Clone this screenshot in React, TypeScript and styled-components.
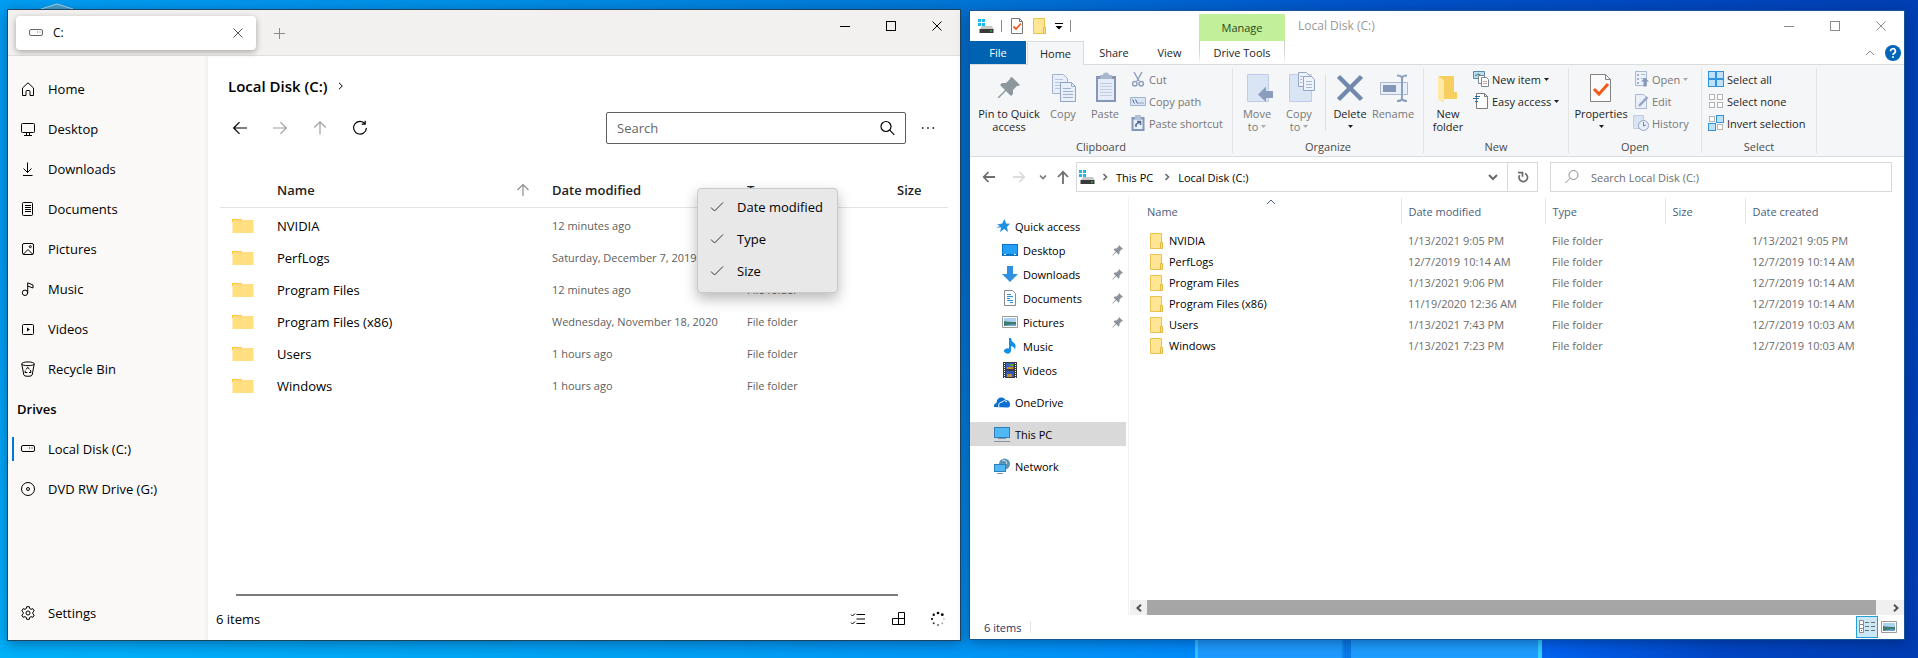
import React from 'react';
import styled, { createGlobalStyle, css } from 'styled-components';

const GlobalStyle = createGlobalStyle`
  *, *::before, *::after { box-sizing: border-box; }
  body {
    margin: 0;
    background: #0078d7;
    font-family: 'Open Sans', 'Noto Sans', sans-serif;
    color: #000;
  }
  button, input {
    font: inherit;
    color: inherit;
    margin: 0;
    padding: 0;
    border: 0;
    background: none;
  }
  a { color: inherit; text-decoration: none; }
  svg { display: block; flex: none; }
`;

/* ---------- desktop ---------- */

const Desktop = styled.div`
  position: relative;
  min-height: 100vh;
  display: grid;
  grid-template-columns: 954fr 936fr;
  gap: 8px;
  padding: 9px 13px 17px 7px;
  background: linear-gradient(90deg, #009df2 0%, #008fe6 25%, #0076d6 50%, #0052c8 72%, #003fb4 100%);
  isolation: isolate;
`;

const Glow = styled.div`
  position: absolute;
  left: 0;
  right: 0;
  bottom: 0;
  height: 60%;
  z-index: -2;
  background: linear-gradient(90deg, #00b1fa 0%, #00a3f4 30%, #0096f6 52%, #008cfb 62%, #0062ee 81%, #0046c4 90%, #003cb2 100%);
  mask-image: linear-gradient(180deg, transparent, #000);
`;

const Beam = styled.div`
  position: absolute;
  left: 62.3%;
  right: 19.6%;
  bottom: 0;
  height: 40px;
  z-index: -1;
  border-left: 3px solid #31c3ff;
  border-right: 4px solid #35d0ff;
  background: linear-gradient(90deg, #1d9bff 0 42%, #0a7ae8 43% 45%, #1e9eff 45% 100%);
`;

const DesktopIcon = styled.svg`
  position: absolute;
  left: 40px;
  top: 3px;
  z-index: -1;
`;

const frame = css`
  display: flex;
  flex-direction: column;
  min-width: 0;
  background: #fff;
  box-shadow: 0 3px 12px rgba(0, 20, 60, 0.4);
`;

/* ---------- modern file manager ---------- */

const FilesWindow = styled.section`
  ${frame}
  border: 1px solid #1d4560;
  font-size: 13px;
  line-height: 20px;
`;

const TabStrip = styled.header`
  display: flex;
  height: 46px;
  padding-left: 8px;
  background: #f3f1ef;
  border-bottom: 1px solid #e1dfdd;
`;

const Tab = styled.div`
  display: flex;
  align-items: center;
  width: 240px;
  height: 34px;
  margin-top: 6px;
  padding: 0 6px 0 12px;
  gap: 9px;
  background: #fff;
  border-radius: 4px;
  box-shadow: 0 2px 6px rgba(0, 0, 0, 0.32);
  font-size: 12px;
`;

const TabName = styled.span`
  flex: 1;
`;

const IconButton = styled.button<{ $w: number; $h: number; $color?: string }>`
  display: flex;
  align-items: center;
  justify-content: center;
  width: ${(p) => p.$w}px;
  height: ${(p) => p.$h}px;
  color: ${(p) => p.$color ?? '#000'};
`;

const NewTab = styled(IconButton)`
  margin: 7px auto 0 7px;
`;

const Columns = styled.div`
  display: flex;
  flex: 1;
  min-height: 0;
`;

const Sidebar = styled.nav`
  display: flex;
  flex-direction: column;
  width: 200px;
  padding: 13px 0 7px;
  background: linear-gradient(90deg, #faf9f8 196px, #f0efee 200px);
`;

const SideLink = styled.a<{ $active?: boolean; $last?: boolean }>`
  display: flex;
  align-items: center;
  gap: 12px;
  height: 40px;
  margin-left: 4px;
  margin-top: ${(p) => (p.$last ? 'auto' : '0')};
  &::before {
    content: '';
    width: 2px;
    height: 24px;
    margin-right: -6px;
    background: ${(p) => (p.$active ? '#0078d4' : 'transparent')};
  }
`;

const SideHeading = styled.h2`
  margin: 0;
  padding-left: 9px;
  font-size: 13px;
  font-weight: 600;
  line-height: 40px;
`;

const Content = styled.main`
  position: relative;
  display: flex;
  flex-direction: column;
  flex: 1;
  min-width: 0;
`;

const Crumb = styled.div`
  display: flex;
  align-items: center;
  gap: 9px;
  height: 40px;
  margin-top: 10px;
  padding-left: 20px;
  font-size: 15px;
  font-weight: 600;
`;

const NavBar = styled.div`
  display: flex;
  align-items: center;
  height: 40px;
  margin: 2px 12px 0;
`;

const SearchField = styled.label`
  display: flex;
  align-items: center;
  width: 300px;
  height: 32px;
  margin: 0 2px 0 auto;
  padding: 0 10px;
  border: 1px solid #605e5c;
  border-radius: 2px;
  input {
    flex: 1;
    min-width: 0;
    outline: none;
  }
  input::placeholder { color: #666; opacity: 1; }
`;

const FilesTable = styled.table`
  width: calc(100% - 24px);
  margin: 26px 12px 0;
  table-layout: fixed;
  border-collapse: collapse;
  th, td { padding: 0; text-align: left; white-space: nowrap; }
  th {
    height: 33px;
    font-weight: 600;
    color: #252423;
    border-bottom: 1px solid #e4e4e4;
  }
  tbody::before { content: ''; display: block; height: 2px; }
  td { height: 32px; }
  td:nth-child(n + 3) { font-size: 11px; color: #605e5c; }
  td svg { margin-left: 12px; }
`;

const SortHead = styled.div`
  display: flex;
  align-items: center;
  justify-content: space-between;
  padding-right: 21px;
  color: #252423;
`;

const ColumnMenu = styled.div`
  position: absolute;
  left: 489px;
  top: 132px;
  width: 141px;
  padding: 2px 0 5px;
  background: #e8e8e8;
  border: 1px solid #c9c9c9;
  border-radius: 4px;
  box-shadow: 0 6px 14px rgba(0, 0, 0, 0.28);
`;

const MenuItem = styled.label`
  display: flex;
  align-items: center;
  gap: 12px;
  height: 32px;
  padding-left: 11px;
  input { position: absolute; opacity: 0; width: 0; height: 0; }
  svg { visibility: hidden; }
  input:checked + svg { visibility: visible; }
`;

const ScrollLine = styled.div`
  height: 2px;
  margin: auto 62px 0 28px;
  background: #7b7b7b;
`;

const FilesStatus = styled.footer`
  display: flex;
  align-items: center;
  height: 40px;
  margin-top: 4px;
  padding: 0 2px 2px 8px;
  span { margin-right: auto; }
`;

/* ---------- classic explorer ---------- */

const ExplorerWindow = styled.section`
  ${frame}
  margin: 1px 0;
  border: 1px solid #17539a;
  font-size: 11px;
  line-height: 13px;
`;

const TitleBar = styled.header`
  display: flex;
  height: 30px;
`;

const QuickTools = styled.div`
  display: flex;
  align-items: center;
  width: 229px;
  padding-left: 8px;
  gap: 7px;
`;

const ToolDivider = styled.i`
  width: 1px;
  height: 12px;
  background: #8a8a8a;
`;

const ContextTab = styled.div`
  display: flex;
  align-items: center;
  justify-content: center;
  width: 86px;
  margin-top: 3px;
  background: #c1ef9a;
  color: #2a4a1a;
`;

const WindowTitle = styled.h1`
  margin: 0 auto 0 13px;
  font-size: 12px;
  font-weight: 400;
  line-height: 30px;
  color: #999;
`;

const RibbonTabs = styled.div`
  display: flex;
  height: 24px;
  border-bottom: 1px solid #dadbdc;
`;

const RibbonTab = styled.button<{ $w: number; $kind?: 'file' | 'open' | 'context' }>`
  width: ${(p) => p.$w}px;
  height: 23px;
  color: #262626;
  ${(p) => p.$kind === 'file' && css`background: #0063b1; color: #fff;`}
  ${(p) => p.$kind === 'open' && css`
    height: 24px;
    margin-left: 1px;
    background: #f5f6f7;
    border: 1px solid #dadbdc;
    border-bottom: 0;
  `}
  ${(p) => p.$kind === 'context' && css`
    margin-left: 4px;
    border: solid;
    border-width: 0 1px;
    border-image: linear-gradient(#d0d0d0 40%, #fff) 1;
  `}
`;

const RibbonEnd = styled.div`
  display: flex;
  align-items: center;
  gap: 5px;
  margin-left: auto;
  padding-right: 3px;
`;

const Ribbon = styled.div`
  display: flex;
  height: 92px;
  padding: 3px 0;
  background: #f5f6f7;
  border-bottom: 1px solid #dadbdc;
`;

const Group = styled.div<{ $w: number }>`
  display: flex;
  flex-direction: column;
  flex: none;
  width: ${(p) => p.$w}px;
  border-right: 1px solid #e2e3e4;
`;

const GroupBody = styled.div<{ $pad: number }>`
  display: flex;
  flex: 1;
  padding-left: ${(p) => p.$pad}px;
`;

const GroupLabel = styled.div`
  height: 13px;
  text-align: center;
  color: #4a4a4a;
`;

const BigButton = styled.button<{ $w: number; $off?: boolean }>`
  display: flex;
  flex-direction: column;
  align-items: center;
  flex: none;
  width: ${(p) => p.$w}px;
  padding-top: 4px;
  white-space: nowrap;
  color: ${(p) => (p.$off ? '#777' : '#1e1e1e')};
  > svg:first-child { margin-bottom: 3px; }
`;

const Line = styled.span`
  display: flex;
  align-items: center;
  justify-content: center;
  gap: 3px;
  min-height: 13px;
`;

const GroupDivider = styled.i`
  width: 1px;
  height: 55px;
  margin: 7px 3px 0 5px;
  background: #dcdde0;
`;

const SmallList = styled.div<{ $ml: number }>`
  margin-left: ${(p) => p.$ml}px;
`;

const SmallButton = styled.button<{ $off?: boolean }>`
  display: flex;
  align-items: center;
  gap: 3px;
  height: 22px;
  white-space: nowrap;
  color: ${(p) => (p.$off ? '#777' : '#1e1e1e')};
`;

const AddressRow = styled.div`
  display: flex;
  align-items: center;
  height: 40px;
  padding: 0 12px 0 6px;
`;

const AddressBox = styled.div`
  display: flex;
  align-items: center;
  flex: 1;
  height: 30px;
  border: 1px solid #d9d9d9;
`;

const DriveSlot = styled.span`
  padding: 0 6px 0 2px;
`;

const PathItem = styled.a`
  margin: 0 10px 0 7px;
`;

const HistoryButton = styled(IconButton)`
  margin-left: auto;
`;

const RefreshButton = styled(IconButton)`
  border-left: 1px solid #d9d9d9;
`;

const ExplorerSearch = styled.label`
  display: flex;
  align-items: center;
  gap: 11px;
  width: 342px;
  height: 30px;
  margin-left: 12px;
  padding: 0 13px;
  border: 1px solid #d9d9d9;
  input {
    flex: 1;
    min-width: 0;
    outline: none;
  }
  input::placeholder { color: #6d6d6d; opacity: 1; }
`;

const TreePane = styled.nav`
  width: 159px;
  padding-top: 17px;
  border-right: 1px solid #f0f0f0;
`;

const TreeLink = styled.a<{ $child?: boolean; $gap?: boolean; $active?: boolean }>`
  display: flex;
  align-items: center;
  gap: 5px;
  height: 24px;
  margin-top: ${(p) => (p.$gap ? 8 : 0)}px;
  margin-right: 2px;
  padding-left: ${(p) => (p.$child ? 32 : 24)}px;
  background: ${(p) => (p.$active ? '#d9d9d9' : 'transparent')};
  .pin { margin: 0 3px 0 auto; }
`;

const ListPane = styled.div`
  display: flex;
  flex-direction: column;
  flex: 1;
  min-width: 0;
`;

const ListTable = styled.table`
  width: 100%;
  margin-top: 1px;
  table-layout: fixed;
  border-collapse: collapse;
  th, td { padding: 0 0 0 7px; text-align: left; white-space: nowrap; }
  th {
    height: 26px;
    font-weight: 400;
    color: #4c607a;
    border-right: 1px solid #e5e5e5;
  }
  th:first-child, td:first-child { padding-left: 18px; }
  th:last-child { border-right: 0; }
  td { height: 21px; color: #6d6d6d; }
  td:first-child { color: #000; }
  tbody::before { content: ''; display: block; height: 6px; }
`;

const NameCell = styled.span`
  display: flex;
  align-items: center;
  gap: 4px;
  padding-left: 2px;
`;

const NameHead = styled.span`
  position: relative;
  display: block;
  svg { position: absolute; left: 119px; top: -8px; }
`;

const ScrollBar = styled.div`
  display: flex;
  align-items: center;
  height: 15px;
  margin: auto 0 0 1px;
  background: #f0f0f0;
`;

const Thumb = styled.div`
  flex: 1;
  height: 15px;
  margin-right: 11px;
  background: #a6a6a6;
`;

const ExplorerStatus = styled.footer`
  display: flex;
  align-items: center;
  height: 24px;
  padding: 0 4px 0 14px;
  color: #1f3364;
  i { width: 1px; height: 12px; margin: 0 auto 0 9px; background: #e6e6e6; }
`;

const ViewButton = styled(IconButton)<{ $on?: boolean }>`
  background: ${(p) => (p.$on ? '#cce8f6' : 'transparent')};
  border: 1px solid ${(p) => (p.$on ? '#26a0da' : 'transparent')};
`;

/* ---------- icons ---------- */

type IconProps = { s?: number; children: React.ReactNode; className?: string; fill?: string; stroke?: string };

const Icon = ({ s = 16, children, className, fill = 'none', stroke = 'currentColor' }: IconProps) => (
  <svg width={s} height={s} viewBox={`0 0 ${s} ${s}`} fill={fill} stroke={stroke} className={className} aria-hidden="true">
    {children}
  </svg>
);

const HomeIcon = () => <Icon><path d="M2.500 7 8 1.800 13.500 7v7.500h-3.500v-4q0-1-1-1h-2q-1 0-1 1v4H2.500z" strokeLinejoin="round" /></Icon>;
const DesktopGlyph = () => <Icon><rect x="1.500" y="2.500" width="13" height="9" rx="1" /><path d="M6.500 11.500v3M9.500 11.500v3M4 14.500h8" /></Icon>;
const DownloadGlyph = () => <Icon><path d="M7.500 1.500v10M3.500 7.500l4 4 4-4M3 14.500h9.500" /></Icon>;
const DocumentGlyph = () => <Icon><rect x="2.500" y="1.500" width="10" height="13" rx="1" /><path d="M5 4.500h6M5 6.500h6M5 8.500h6M5 10.500h6" /></Icon>;
const PictureGlyph = () => <Icon><rect x="2.500" y="2.500" width="11" height="11" rx="1.500" /><path d="m3.500 13 4.500-4.500L12.500 13" /><circle cx="10.300" cy="5.700" r="1" /></Icon>;
const MusicGlyph = () => <Icon><circle cx="5" cy="11.800" r="2.700" /><path d="M7.700 12V1.800l5.300 2.200v3L7.700 5" strokeLinejoin="round" /></Icon>;
const VideoGlyph = () => <Icon><rect x="2.500" y="3.500" width="11" height="10" rx="1" /><path d="m7 6.500 3 2-3 2z" fill="currentColor" stroke="none" /></Icon>;
const RecycleGlyph = () => (
  <Icon><ellipse cx="8" cy="2.800" rx="6.300" ry="1.900" /><path d="m1.800 3 2 11q.2 1.300 4.200 1.300T12.200 14l2-11" /><path d="M6 8.500 7.800 6.300l1.600 2M10.500 9l.5 2.500H9M5.200 9.700 5 11.500h2.300" /></Icon>
);
const DriveGlyph = ({ color }: { color?: string }) => (
  <Icon stroke={color ?? 'currentColor'}><rect x="1.500" y="4.500" width="13" height="6" rx="1.500" /><path d="M9 7h1M11.500 7h1" /></Icon>
);
const DiscGlyph = () => <Icon><circle cx="8" cy="8" r="6.500" /><circle cx="8" cy="8" r="1.500" /></Icon>;
const GearGlyph = () => (
  <Icon><circle cx="8" cy="8" r="2" /><path d="m6.700 1.700-.4 1.900-1.300.7-1.900-.6-1.300 2.200 1.400 1.300v1.600L1.800 10l1.300 2.300 1.900-.6 1.300.7.4 1.900h2.600l.4-1.900 1.300-.7 1.900.6 1.300-2.300-1.400-1.200V7.200l1.400-1.300-1.300-2.200-1.900.6-1.300-.7-.4-1.900z" strokeLinejoin="round" /></Icon>
);
const CloseGlyph = () => <Icon s={12}><path d="m1.500 1.500 9 9M10.500 1.500l-9 9" /></Icon>;
const PlusGlyph = () => <Icon s={12}><path d="M6.500 1v11M1 6.500h11" /></Icon>;
const MinGlyph = () => <Icon s={12}><path d="M1 6.500h10" /></Icon>;
const MaxGlyph = () => <Icon s={12}><rect x="1.500" y="1.500" width="9" height="9" /></Icon>;
const ArrowLeft = () => <Icon><path d="M15 8H1.800M7.500 2.200 1.700 8l5.800 5.800" strokeWidth="1.200" /></Icon>;
const ArrowRight = () => <Icon><path d="M1 8h13.200M8.500 2.200 14.300 8l-5.800 5.800" strokeWidth="1.200" /></Icon>;
const ArrowUp = () => <Icon><path d="M8 14.500V2M2.300 7.500 8 1.800l5.700 5.700" strokeWidth="1.200" /></Icon>;
const ArrowUpSmall = () => <Icon stroke="#8e8e8e"><path d="M8 14V2.500M2.500 8 8 2.500 13.500 8" strokeWidth="1.200" /></Icon>;
const RefreshGlyph = () => <Icon><path d="M13 3.700A6.400 6.400 0 1 0 14.400 8M9.700 4.200h3.500V.8" strokeWidth="1.200" /></Icon>;
const SearchGlyph = () => <Icon><circle cx="7" cy="6.500" r="5" strokeWidth="1.200" /><path d="m10.700 10.200 4.600 4.600" strokeWidth="1.200" /></Icon>;
const MoreGlyph = () => <Icon fill="#000" stroke="none"><path d="M2 7.200h1.500v1.500H2zM7.200 7.200h1.500v1.500H7.200zM12.500 7.200H14v1.500h-1.500z" /></Icon>;
const ChevronGlyph = () => <Icon s={8}><path d="m2 .8 3.300 3.200L2 7.200" /></Icon>;
const CheckGlyph = () => <Icon><path d="m2 8.500 3.500 3.500L14 3.500" stroke="#333" /></Icon>;
const ListGlyph = () => <Icon><path d="m1 3.500 1.500 1.500L5 2.500M1 11.500 2.500 13 5 10.500M6.500 3.500H15M6.500 8H15M6.500 12.500H15" /></Icon>;
const GridGlyph = () => <Icon><path d="M8.500 1.500h6v12h-12v-6h12M8.500 1.500v12" /></Icon>;
const SpinnerGlyph = () => (
  <Icon fill="#000" stroke="none">
    <circle cx="8" cy="2" r="1.300" /><circle cx="12.300" cy="3.700" r="1.400" /><circle cx="14" cy="8" r="1" opacity=".2" />
    <circle cx="12.300" cy="12.300" r=".9" opacity=".4" /><circle cx="8" cy="14" r="1" opacity=".6" />
    <circle cx="3.700" cy="12.300" r="1" opacity=".8" /><circle cx="2" cy="8" r="1.100" /><circle cx="3.700" cy="3.700" r="1.200" />
  </Icon>
);
const BigFolder = () => (
  <svg width="22" height="14" viewBox="0 0 22 14" aria-hidden="true">
    <path d="M0 0h9l1 1h12v13H0z" fill="#ffdf80" /><path d="M0 0h9l1 1-1 2H0z" fill="#ffc83d" /><path d="M1 2h8" stroke="#fff3cf" />
    <path d="M.500 3v11M21.500 2v12" stroke="#fff" opacity=".5" />
  </svg>
);

const DriveColor = () => (
  <Icon stroke="none">
    <path d="M0 1h3v3H0zM4 1h3v3H4zM0 5h3v3H0zM4 5h3v3H4z" fill="#1bb8f0" />
    <path d="M4 8h10l1.500 3H2z" fill="#c9c9c9" /><path d="M1.500 11h14v4h-14z" fill="#3a3a3a" /><path d="M12 12.500h2v1h-2z" fill="#36e04a" />
  </Icon>
);
const CheckPage = () => (
  <Icon><path d="M2.500.500h8l3 3v12h-11z" fill="#fff" stroke="#777" /><path d="M10.500.500v3h3" stroke="#777" /><path d="m4.500 8.500 2.500 2.500 5-5.500" stroke="#f2591b" strokeWidth="1.800" /></Icon>
);
const SmallFolder = () => (
  <Icon><path d="M1.500.500h11v15h-11z" fill="#ffe594" stroke="#ecc24c" /><path d="M11.500 9.500h2v6h-2z" fill="#ffe594" stroke="#e3b73d" /></Icon>
);
const Caret = ({ color = '#1e1e1e' }: { color?: string }) => (
  <svg width="5" height="3" viewBox="0 0 5 3" aria-hidden="true"><path d="M0 0h5L2.500 3z" fill={color} /></svg>
);
const PinBig = () => (
  <Icon s={32} stroke="none"><path d="m19 5 8 8-2 1-1 0-4 4 0 4-2 2-5-5-7 7-1 0 0-1 7-7-5-5 2-2 4 0 4-4 0-1z" fill="#8d979e" /></Icon>
);
const CopyBig = () => (
  <Icon s={32} stroke="#a3b3cc">
    <path d="M5.500 2.500h11l4 4v15h-15z" fill="#e9eff9" /><path d="M8 7.500h8M8 10.500h10M8 13.500h10M8 16.500h10" stroke="#b8c8e0" />
    <path d="M13.500 10.500h11l4 4v15h-15z" fill="#e9eff9" stroke="#8fa3c3" /><path d="M24.500 10.500v4h4M16 16.500h8M16 19.500h10M16 22.500h10M16 25.500h10" stroke="#9fb1cf" />
  </Icon>
);
const PasteBig = () => (
  <Icon s={32} stroke="none">
    <path d="M7 4h20v26H7z" fill="#8497b8" /><path d="M9 7h16v21H9z" fill="#e6edf8" /><path d="M11 3h3a3 2.500 0 0 1 6 0h3v4H11z" fill="#a9b6cb" />
    <path d="M11 11.500h12M11 14.500h12M11 17.500h12M11 20.500h12M11 23.500h12" stroke="#c0cde2" />
  </Icon>
);
const MoveBig = () => (
  <Icon s={32} stroke="none"><path d="M6.500 2.500h21v27h-21z" fill="#d9e4f4" stroke="#c0cde2" /><path d="m17 22.500 8-8V19h7v7h-7v4z" fill="#8b9dbd" /></Icon>
);
const CopyToBig = () => (
  <Icon s={32} stroke="#93a5c4">
    <path d="M6.500 2.500h22v27h-22z" fill="#d9e4f4" stroke="#c0cde2" /><path d="M15.500.500h8l3 3v11h-11z" fill="#eef3fb" />
    <path d="M20.500 4.500h8l3 3v11h-11z" fill="#eef3fb" /><path d="M23 9.500h6M23 12.500h6M23 15.500h6M17 4.500h3M17 7.500h2M17 10.500h2" stroke="#a9b9d4" />
  </Icon>
);
const DeleteBig = () => <Icon s={32} stroke="#7388ad"><path d="m4.500 4.500 23 23M27.500 4.500l-23 23" strokeWidth="4.500" /></Icon>;
const RenameBig = () => (
  <Icon s={32} stroke="#a9b7d0"><path d="M3.500 10.500h27v12h-27z" fill="#e9eff9" /><path d="M6 13h13v7H6z" fill="#8497b8" stroke="none" /><path d="M20 3.500q4 0 5 2 1-2 5-2M20 29q4 0 5-2 1 2 5 2M25 5v22" stroke="#8d9fbe" strokeWidth="2" /></Icon>
);
const NewFolderBig = () => (
  <Icon s={32} stroke="none"><path d="M7 4h15v16h3v7H12z" fill="#f6cf60" /><path d="M6 4.500 12 8v23l-6-4z" fill="#ffe9a6" /></Icon>
);
const PropertiesBig = () => (
  <Icon s={32}><path d="M5.500 2.500h15l5 5v22h-20z" fill="#fbfbfb" stroke="#838383" /><path d="M20.500 2.500v5h5" stroke="#838383" /><path d="m9 17 5 5 9-10" stroke="#f2591b" strokeWidth="3" /></Icon>
);
const CutIcon = () => (
  <Icon stroke="#8fa0bd"><path d="m4 1 5 9M12 1 7 10" strokeWidth="1.500" /><circle cx="4.800" cy="12.800" r="2.200" strokeWidth="1.500" /><circle cx="11.200" cy="12.800" r="2.200" strokeWidth="1.500" /></Icon>
);
const PathIcon = () => (
  <Icon stroke="#a3b3cc"><path d="M.500 4.500h15v8H.500z" fill="#d9e4f4" /><path d="m2.500 6.500 2 4M5.500 6.500l2 4M8.500 10h1M10.500 10h1M12.500 10h1" stroke="#50658c" /></Icon>
);
const ShortcutIcon = () => (
  <Icon stroke="none"><path d="M1.500 2h13v14h-13z" fill="#8497b8" /><path d="M5 0h6v4H5z" fill="#b3c0d4" /><path d="M3.500 4.500h9v9.500h-9z" fill="#eaf0fa" /><path d="M6 12V9.500L9.500 7M7 6.500h3.500V10" stroke="#50658c" strokeWidth="1.500" fill="none" /></Icon>
);
const NewItemIcon = () => (
  <Icon stroke="#7b868f"><path d="M.500.500h11v7H.500z" fill="#b9dcf2" stroke="#5d8aa8" /><path d="M2 5l3-2 4 2" stroke="#2f7d58" /><path d="M5.500 4.500h6v8h-6z" fill="#fff" /><path d="M8.500 6.500h5l2 2v7h-7z" fill="#fff" /><path d="M10 10.500h4M10 12.500h4" stroke="#d8a0a0" /></Icon>
);
const EasyIcon = () => (
  <Icon stroke="#7b7b7b"><path d="M3.500.500h8l3 3v12h-11z" fill="#fff" /><path d="M11.500.500v3h3" /><path d="M2 3.500h5M0 5.500h6M2 8.500h3" stroke="#1c6ea4" /></Icon>
);
const OpenIcon = () => (
  <Icon stroke="#a9b7d0"><path d="M2.500.500h11v14h-11z" fill="#eef3fb" /><path d="M4 3h2v2H4zM4 7h2v2H4zM4 11h2v2H4z" fill="#9db0cf" stroke="none" /><path d="M8 3.500h4M8 7.500h3" /><path d="m12 6.500 4 4h-2.500v5h-3v-5H8z" fill="#8497b8" stroke="none" /></Icon>
);
const EditIcon = () => (
  <Icon stroke="#a9b7d0"><path d="M2.500 1.500h8l3 3v11h-11z" fill="#eaf0fa" /><path d="M6 13 14.500 4" stroke="#93a5c4" strokeWidth="2.500" /></Icon>
);
const HistoryIcon = () => (
  <Icon stroke="#a9b7d0"><path d="M.500.500h10v13H.500z" fill="#d9e4f4" stroke="#c0cde2" /><circle cx="10.500" cy="10.500" r="5" fill="#e9eff9" stroke="#93a5c4" /><path d="M10.500 7v4l2.500-1" stroke="#6f84a8" /></Icon>
);
const tile = (x: number, y: number, on: boolean) => (
  <rect key={`${x}${y}`} x={x + 0.5} y={y + 0.5} width={on ? 7 : 5} height={on ? 7 : 5} fill={on ? '#bfe1fb' : '#fff'} stroke={on ? '#2f93e0' : '#b3b3b3'} />
);
const SelectAllIcon = () => <Icon>{tile(0, 0, true)}{tile(8, 0, true)}{tile(0, 8, true)}{tile(8, 8, true)}</Icon>;
const SelectNoneIcon = () => <Icon>{tile(1, 1, false)}{tile(9, 1, false)}{tile(1, 9, false)}{tile(9, 9, false)}</Icon>;
const InvertIcon = () => <Icon>{tile(1, 1, false)}{tile(8, 0, true)}{tile(0, 8, true)}{tile(9, 9, false)}</Icon>;

const HelpIcon = () => (
  <svg width="16" height="16" viewBox="0 0 16 16" aria-hidden="true">
    <circle cx="8" cy="8" r="8" fill="#0064b8" />
    <path d="M5.600 6.200a2.400 2.400 0 1 1 3.600 2Q8 8.900 8 10" fill="none" stroke="#fff" strokeWidth="1.700" /><circle cx="8" cy="12" r="1" fill="#fff" />
  </svg>
);
const NavLeft = () => <Icon><path d="M14 8H3M7.500 3 2.700 8l4.800 5" strokeWidth="1.800" /></Icon>;
const NavRight = () => <Icon><path d="M2 8h11M8.500 3l4.800 5-4.800 5" strokeWidth="1.800" /></Icon>;
const NavUp = () => <Icon><path d="M8 15V3M3 8l5-5.200L13 8" strokeWidth="1.800" /></Icon>;
const Down = () => <Icon s={8}><path d="M1 2.500 4 5.500l3-3" strokeWidth="1.600" /></Icon>;
const DownWide = () => <Icon s={10}><path d="m1 3 4 4 4-4" strokeWidth="2" /></Icon>;
const UpThin = () => <Icon s={10}><path d="m1 7 4-4 4 4" /></Icon>;
const PathArrow = () => <Icon s={8}><path d="m2.500 1 3 3-3 3" stroke="#6a6a6a" strokeWidth="1.600" /></Icon>;
const ReloadIcon = () => <Icon s={12}><path d="M8 2.600A4.200 4.200 0 1 1 2.700 4.200M1 1.700h4.500v4" strokeWidth="1.700" /></Icon>;
const LensIcon = () => <Icon stroke="#8a8a8a"><circle cx="9.500" cy="6" r="4.500" /><path d="M6.300 9.200 1.500 14" /></Icon>;

const StarIcon = () => <Icon stroke="none"><path d="m10.500 1 1.600 4.500 3.900.3-3 2.900L14 14l-3.700-3L6 14l1.200-4.500L2 9.500l4-1.500-3-1.500 5.200-1z" fill="#1f8fe0" /></Icon>;
const DesktopColor = () => <Icon stroke="none"><path d="M0 2h16v12H0z" fill="#0c74c8" /><path d="M1 3h14v9H1z" fill="#23a0f5" /><path d="M2 12.500h2M12 12.500h2" stroke="#fff" /></Icon>;
const DownloadColor = () => <Icon stroke="none"><path d="M5 0h6v8h5l-8 8-8-8h5z" fill="#2f8fe0" /></Icon>;
const DocumentColor = () => <Icon><path d="M2.500.500h8l3 3v12h-11z" fill="#fff" stroke="#8a8a8a" /><path d="M5 4.500h4M5 6.500h6M5 8.500h3M5 10.500h6M8 12.500h3" stroke="#2b8fdc" /></Icon>;
const PictureColor = () => (
  <Icon stroke="none"><path d="M.500 2.500h15v11H.500z" fill="#fff" stroke="#9a9a9a" /><path d="M2 4h12v4H2z" fill="#a9d2f5" /><path d="M2 7q4 1 12 1v4H2z" fill="#3f7a6a" /><path d="M5 11q5-1 9-.500V12H2z" fill="#6aa7d8" /></Icon>
);
const MusicColor = () => <Icon stroke="none"><path d="M7 0h2q0 3 3 5t.5 7q.5-3-3.500-4v5a3.500 2.700 0 1 1-2-2.500z" fill="#0f8fe8" /></Icon>;
const VideoColor = () => (
  <Icon stroke="none"><path d="M1 0h14v16H1z" fill="#3a3a3a" /><path d="M2.500 1v15M13.500 1v15" stroke="#fff" strokeDasharray="1 1" /><path d="M4 1h8v6H4z" fill="#3b62c0" /><path d="M4 9h8v6H4z" fill="#2f55b0" /><path d="M5 5h6v2H5zM5 12h5v3H5z" fill="#c98a2a" /><path d="M8 2h3v2H8z" fill="#4fae3a" /></Icon>
);
const CloudColor = () => <Icon stroke="none"><path d="M0 13q-.5-3.500 2.500-4Q3 3 8 3.500 11 4 11.500 6q4 0 4.500 4 0 3.500-2 3.500z" fill="#0a6fd0" /><path d="M5 13q-1.500-4 3-5 2.500-3 5 0" stroke="#fff" fill="none" /></Icon>;
const PcColor = () => <Icon stroke="none"><path d="M0 1h16v11H0z" fill="#2e7fb8" /><path d="M1 2h14v9H1z" fill="#52b8f5" /><path d="M4 12.500h8M0 15.500h16" stroke="#7f95a8" /></Icon>;
const NetworkColor = () => <Icon stroke="none"><circle cx="10.500" cy="6" r="5.500" fill="#5a94b8" /><path d="M8 2q4 0 5 3l-3 3" stroke="#cfe3ee" fill="none" /><path d="M0 6h12v8H0z" fill="#2e7fb8" /><path d="M1 7h10v6H1z" fill="#52b8f5" /><path d="M3 15.500h6" stroke="#7f95a8" /></Icon>;
const PinSmall = () => (
  <Icon s={11} className="pin" stroke="none"><path d="m7 0 4 4-1.500.5-2 2v2L6.500 9.500 4.300 7.300 1 10.500H.500V10l3.200-3.300L1.500 4.500l1-1h2l2-2z" fill="#89939b" /></Icon>
);
const DetailsIcon = () => <Icon stroke="#8a8a8a"><path d="M.500 1.500h4v12h-4zM.500 5.500h4M.500 9.500h4" fill="#fff" /><path d="M6 3.500h4M12 3.500h4M6 7.500h4M12 7.500h4M6 11.500h4M12 11.500h4" stroke="#6d6d6d" /><path d="M2 11h1v1H2z" fill="#d33" stroke="none" /></Icon>;

/* ---------- data ---------- */

const places = [
  { name: 'Home', icon: <HomeIcon /> },
  { name: 'Desktop', icon: <DesktopGlyph /> },
  { name: 'Downloads', icon: <DownloadGlyph /> },
  { name: 'Documents', icon: <DocumentGlyph /> },
  { name: 'Pictures', icon: <PictureGlyph /> },
  { name: 'Music', icon: <MusicGlyph /> },
  { name: 'Videos', icon: <VideoGlyph /> },
  { name: 'Recycle Bin', icon: <RecycleGlyph /> },
];

const folders = [
  { name: 'NVIDIA', ago: '12 minutes ago', modified: '1/13/2021 9:05 PM', created: '1/13/2021 9:05 PM' },
  { name: 'PerfLogs', ago: 'Saturday, December 7, 2019', modified: '12/7/2019 10:14 AM', created: '12/7/2019 10:14 AM' },
  { name: 'Program Files', ago: '12 minutes ago', modified: '1/13/2021 9:06 PM', created: '12/7/2019 10:14 AM' },
  { name: 'Program Files (x86)', ago: 'Wednesday, November 18, 2020', modified: '11/19/2020 12:36 AM', created: '12/7/2019 10:14 AM' },
  { name: 'Users', ago: '1 hours ago', modified: '1/13/2021 7:43 PM', created: '12/7/2019 10:03 AM' },
  { name: 'Windows', ago: '1 hours ago', modified: '1/13/2021 7:23 PM', created: '12/7/2019 10:03 AM' },
];

const tree = [
  { name: 'Quick access', icon: <StarIcon /> },
  { name: 'Desktop', icon: <DesktopColor />, child: true, pin: true },
  { name: 'Downloads', icon: <DownloadColor />, child: true, pin: true },
  { name: 'Documents', icon: <DocumentColor />, child: true, pin: true },
  { name: 'Pictures', icon: <PictureColor />, child: true, pin: true },
  { name: 'Music', icon: <MusicColor />, child: true },
  { name: 'Videos', icon: <VideoColor />, child: true },
  { name: 'OneDrive', icon: <CloudColor />, gap: true },
  { name: 'This PC', icon: <PcColor />, gap: true, active: true },
  { name: 'Network', icon: <NetworkColor />, gap: true },
];

/* ---------- windows ---------- */

const WindowButtons = ({ color, h }: { color: string; h: number }) => (
  <>
    <IconButton $w={46} $h={h} $color={color} aria-label="Minimize"><MinGlyph /></IconButton>
    <IconButton $w={46} $h={h} $color={color} aria-label="Maximize"><MaxGlyph /></IconButton>
    <IconButton $w={46} $h={h} $color={color} aria-label="Close"><CloseGlyph /></IconButton>
  </>
);

const Files = () => (
  <FilesWindow>
    <TabStrip>
      <Tab>
        <DriveGlyph color="#666" />
        <TabName>C:</TabName>
        <IconButton $w={24} $h={24} $color="#555" aria-label="Close tab"><CloseGlyph /></IconButton>
      </Tab>
      <NewTab $w={32} $h={32} $color="#8a8a8a" aria-label="New tab"><PlusGlyph /></NewTab>
      <WindowButtons color="#000" h={32} />
    </TabStrip>
    <Columns>
      <Sidebar>
        {places.map((p) => (
          <SideLink key={p.name} href="#">{p.icon}{p.name}</SideLink>
        ))}
        <SideHeading>Drives</SideHeading>
        <SideLink href="#" $active><DriveGlyph />Local Disk (C:)</SideLink>
        <SideLink href="#"><DiscGlyph />DVD RW Drive (G:)</SideLink>
        <SideLink href="#" $last><GearGlyph />Settings</SideLink>
      </Sidebar>
      <Content>
        <Crumb>Local Disk (C:) <ChevronGlyph /></Crumb>
        <NavBar>
          <IconButton $w={40} $h={40} aria-label="Back"><ArrowLeft /></IconButton>
          <IconButton $w={40} $h={40} $color="#a0a0a0" aria-label="Forward"><ArrowRight /></IconButton>
          <IconButton $w={40} $h={40} $color="#a0a0a0" aria-label="Up"><ArrowUp /></IconButton>
          <IconButton $w={40} $h={40} aria-label="Refresh"><RefreshGlyph /></IconButton>
          <SearchField>
            <input type="text" placeholder="Search" aria-label="Search" />
            <SearchGlyph />
          </SearchField>
          <IconButton $w={40} $h={40} aria-label="More"><MoreGlyph /></IconButton>
        </NavBar>
        <FilesTable>
          <colgroup>
            <col style={{ width: 57 }} /><col style={{ width: 275 }} /><col style={{ width: 195 }} /><col style={{ width: 150 }} /><col />
          </colgroup>
          <thead>
            <tr>
              <th />
              <th><SortHead>Name <ArrowUpSmall /></SortHead></th>
              <th>Date modified</th>
              <th>Type</th>
              <th>Size</th>
            </tr>
          </thead>
          <tbody>
            {folders.map((f) => (
              <tr key={f.name}>
                <td><BigFolder /></td>
                <td>{f.name}</td>
                <td>{f.ago}</td>
                <td>File folder</td>
                <td />
              </tr>
            ))}
          </tbody>
        </FilesTable>
        <ColumnMenu>
          {['Date modified', 'Type', 'Size'].map((c) => (
            <MenuItem key={c}><input type="checkbox" defaultChecked /><CheckGlyph />{c}</MenuItem>
          ))}
        </ColumnMenu>
        <ScrollLine />
        <FilesStatus>
          <span>6 items</span>
          <IconButton $w={40} $h={32} aria-label="Select"><ListGlyph /></IconButton>
          <IconButton $w={40} $h={32} aria-label="Layout"><GridGlyph /></IconButton>
          <IconButton $w={40} $h={32} aria-label="Activity"><SpinnerGlyph /></IconButton>
        </FilesStatus>
      </Content>
    </Columns>
  </FilesWindow>
);

const RibbonGroup = ({ label, w, pad, children }: { label: string; w: number; pad: number; children: React.ReactNode }) => (
  <Group $w={w}>
    <GroupBody $pad={pad}>{children}</GroupBody>
    <GroupLabel>{label}</GroupLabel>
  </Group>
);

const Explorer = () => (
  <ExplorerWindow>
    <TitleBar>
      <QuickTools>
        <DriveColor />
        <ToolDivider />
        <CheckPage />
        <SmallFolder />
        <Icon s={8}><path d="M0 1.500h8" /><path d="M.500 4h7L4 7.500z" fill="currentColor" stroke="none" /></Icon>
        <ToolDivider />
      </QuickTools>
      <ContextTab>Manage</ContextTab>
      <WindowTitle>Local Disk (C:)</WindowTitle>
      <WindowButtons color="#8c8c8c" h={29} />
    </TitleBar>
    <RibbonTabs>
      <RibbonTab $w={56} $kind="file">File</RibbonTab>
      <RibbonTab $w={57} $kind="open">Home</RibbonTab>
      <RibbonTab $w={60}>Share</RibbonTab>
      <RibbonTab $w={51}>View</RibbonTab>
      <RibbonTab $w={86} $kind="context">Drive Tools</RibbonTab>
      <RibbonEnd>
        <IconButton $w={20} $h={22} $color="#8c8c8c" aria-label="Collapse ribbon"><UpThin /></IconButton>
        <IconButton $w={16} $h={22} aria-label="Help"><HelpIcon /></IconButton>
      </RibbonEnd>
    </RibbonTabs>
    <Ribbon>
      <RibbonGroup label="Clipboard" w={263} pad={6}>
        <BigButton $w={66}><PinBig /><Line>Pin to Quick</Line><Line>access</Line></BigButton>
        <BigButton $w={42} $off><CopyBig /><Line>Copy</Line></BigButton>
        <BigButton $w={42} $off><PasteBig /><Line>Paste</Line></BigButton>
        <SmallList $ml={4}>
          <SmallButton $off><CutIcon />Cut</SmallButton>
          <SmallButton $off><PathIcon />Copy path</SmallButton>
          <SmallButton $off><ShortcutIcon />Paste shortcut</SmallButton>
        </SmallList>
      </RibbonGroup>
      <RibbonGroup label="Organize" w={191} pad={3}>
        <BigButton $w={42} $off><MoveBig /><Line>Move</Line><Line>to <Caret color="#aaa" /></Line></BigButton>
        <BigButton $w={42} $off><CopyToBig /><Line>Copy</Line><Line>to <Caret color="#aaa" /></Line></BigButton>
        <GroupDivider />
        <BigButton $w={42}><DeleteBig /><Line>Delete</Line><Line><Caret /></Line></BigButton>
        <BigButton $w={44} $off><RenameBig /><Line>Rename</Line></BigButton>
      </RibbonGroup>
      <RibbonGroup label="New" w={145} pad={3}>
        <BigButton $w={42}><NewFolderBig /><Line>New</Line><Line>folder</Line></BigButton>
        <SmallList $ml={4}>
          <SmallButton><NewItemIcon />New item <Caret /></SmallButton>
          <SmallButton><EasyIcon />Easy access <Caret /></SmallButton>
        </SmallList>
      </RibbonGroup>
      <RibbonGroup label="Open" w={133} pad={2}>
        <BigButton $w={60}><PropertiesBig /><Line>Properties</Line><Line><Caret /></Line></BigButton>
        <SmallList $ml={2}>
          <SmallButton $off><OpenIcon />Open <Caret color="#aaa" /></SmallButton>
          <SmallButton $off><EditIcon />Edit</SmallButton>
          <SmallButton $off><HistoryIcon />History</SmallButton>
        </SmallList>
      </RibbonGroup>
      <RibbonGroup label="Select" w={115} pad={6}>
        <SmallList $ml={0}>
          <SmallButton><SelectAllIcon />Select all</SmallButton>
          <SmallButton><SelectNoneIcon />Select none</SmallButton>
          <SmallButton><InvertIcon />Invert selection</SmallButton>
        </SmallList>
      </RibbonGroup>
    </Ribbon>
    <AddressRow>
      <IconButton $w={26} $h={30} $color="#6e6e6e" aria-label="Back"><NavLeft /></IconButton>
      <IconButton $w={34} $h={30} $color="#dcdcdc" aria-label="Forward"><NavRight /></IconButton>
      <IconButton $w={14} $h={30} $color="#777" aria-label="Recent locations"><Down /></IconButton>
      <IconButton $w={26} $h={30} $color="#6e6e6e" aria-label="Up"><NavUp /></IconButton>
      <AddressBox>
        <DriveSlot><DriveColor /></DriveSlot>
        <PathArrow />
        <PathItem href="#">This PC</PathItem>
        <PathArrow />
        <PathItem href="#">Local Disk (C:)</PathItem>
        <HistoryButton $w={28} $h={28} $color="#6a6a6a" aria-label="Previous locations"><DownWide /></HistoryButton>
        <RefreshButton $w={30} $h={28} $color="#6a6a6a" aria-label="Refresh"><ReloadIcon /></RefreshButton>
      </AddressBox>
      <ExplorerSearch>
        <LensIcon />
        <input type="text" placeholder="Search Local Disk (C:)" aria-label="Search Local Disk (C:)" />
      </ExplorerSearch>
    </AddressRow>
    <Columns>
      <TreePane>
        {tree.map((t) => (
          <TreeLink key={t.name} href="#" $child={t.child} $gap={t.gap} $active={t.active}>
            {t.icon}{t.name}{t.pin && <PinSmall />}
          </TreeLink>
        ))}
      </TreePane>
      <ListPane>
        <ListTable>
          <colgroup>
            <col style={{ width: 272 }} /><col style={{ width: 144 }} /><col style={{ width: 120 }} /><col style={{ width: 80 }} /><col />
          </colgroup>
          <thead>
            <tr>
              <th><NameHead>Name <UpThin /></NameHead></th>
              <th>Date modified</th>
              <th>Type</th>
              <th>Size</th>
              <th>Date created</th>
            </tr>
          </thead>
          <tbody>
            {folders.map((f) => (
              <tr key={f.name}>
                <td><NameCell><SmallFolder />{f.name}</NameCell></td>
                <td>{f.modified}</td>
                <td>File folder</td>
                <td />
                <td>{f.created}</td>
              </tr>
            ))}
          </tbody>
        </ListTable>
        <ScrollBar>
          <IconButton $w={17} $h={15} $color="#505050" aria-label="Scroll left"><Icon s={8}><path d="M6 .800 2.500 4 6 7.200" strokeWidth="2" /></Icon></IconButton>
          <Thumb />
          <IconButton $w={17} $h={15} $color="#505050" aria-label="Scroll right"><Icon s={8}><path d="M2 .800 5.500 4 2 7.200" strokeWidth="2" /></Icon></IconButton>
        </ScrollBar>
      </ListPane>
    </Columns>
    <ExplorerStatus>
      <span>6 items</span>
      <i />
      <ViewButton $w={22} $h={22} $on aria-label="Details view"><DetailsIcon /></ViewButton>
      <ViewButton $w={22} $h={22} aria-label="Thumbnail view"><PictureColor /></ViewButton>
    </ExplorerStatus>
  </ExplorerWindow>
);

export default function App() {
  return (
    <>
      <GlobalStyle />
      <Desktop>
        <Glow />
        <Beam />
        <DesktopIcon width="34" height="12" viewBox="0 0 34 12" aria-hidden="true">
          <path d="M1 6 17 1l16 5v6H1z" fill="#4aa0c8" stroke="#a9d4e6" />
        </DesktopIcon>
        <Files />
        <Explorer />
      </Desktop>
    </>
  );
}
